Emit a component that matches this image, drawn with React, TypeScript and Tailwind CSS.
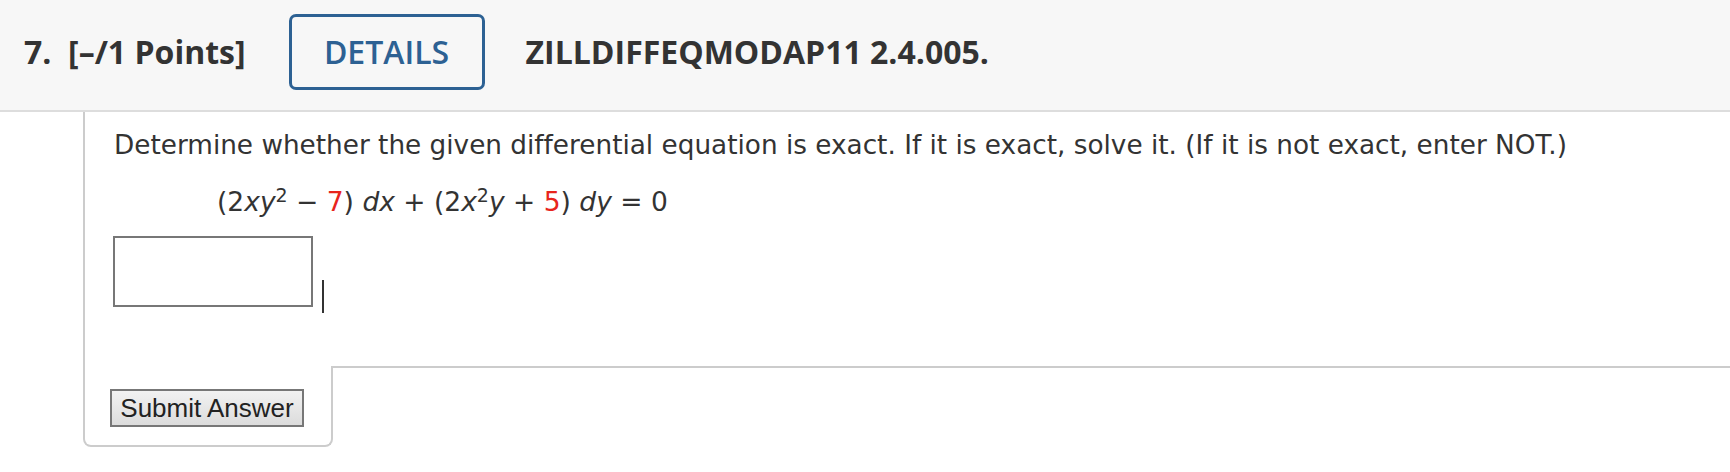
import React from 'react';

const App: React.FC = () => {
  return (
    <div className="w-[1730px] h-[472px] bg-white overflow-hidden">
      {/* En-tête de la question */}
      <div className="h-[112px] bg-[#f7f7f7] border-b-2 border-[#dddddd] flex items-center pl-[24px] pb-[6px] text-[#333333] font-['Open_Sans',sans-serif]">
        <span className="text-[32px] font-bold">7.&nbsp; [–/1 Points]</span>
        <div className="ml-[43px] h-[76px] w-[196px] border-[3px] border-[#2d6193] rounded-[7px] flex items-center justify-center text-[32px] font-semibold text-[#2d6193]">
          DETAILS
        </div>
        <span className="ml-[41px] text-[32px] font-bold">ZILLDIFFEQMODAP11 2.4.005.</span>
      </div>

      {/* Corps de la question */}
      <div className="ml-[83px] font-['DejaVu_Sans','Verdana',sans-serif] text-[#333333] [font-variant-ligatures:none]">
        <div className="border-l-2 border-[#cccccc] pl-[29px] pt-[18px] h-[254px]">
          <p className="text-[26.3px] leading-[30px]">
            Determine whether the given differential equation is exact. If it is exact, solve it. (If it is not exact, enter NOT.)
          </p>
          <p className="text-[26.5px] leading-[30px] mt-[27px] ml-[103px]">
            (2<i>xy</i>
            <sup className="text-[19px]">2</sup> − <span className="text-[#e8241c]">7</span>) <i>dx</i> + (2<i>x</i>
            <sup className="text-[19px]">2</sup>
            <i>y</i> + <span className="text-[#e8241c]">5</span>) <i>dy</i> = 0
          </p>
          <div className="flex items-end mt-[19px] -ml-[1px]">
            <div className="w-[200px] h-[71px] border-2 border-[#777777] bg-white" />
            <div className="ml-[9px] -mb-[6px] w-[2px] h-[33px] bg-[#333333]" />
          </div>
        </div>
        <div className="flex">
          <div className="w-[250px] h-[81px] border-l-2 border-r-2 border-b-2 border-[#cccccc] rounded-b-[8px] pl-[25px] pt-[23px]">
            <button className="w-[194px] h-[38px] border-2 border-[#777777] bg-gradient-to-b from-[#f2f2f2] to-[#dcdcdc] text-[26px] leading-none text-[#222222] font-['Liberation_Sans',Arial,sans-serif]">
              Submit Answer
            </button>
          </div>
          <div className="flex-1 border-t-2 border-[#cccccc]" />
        </div>
      </div>
    </div>
  );
};

export default App;
